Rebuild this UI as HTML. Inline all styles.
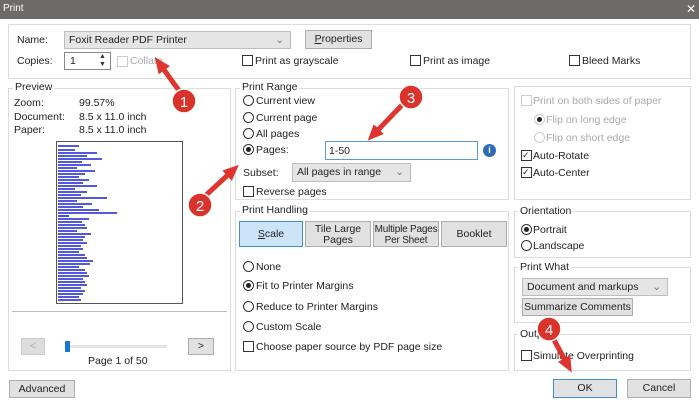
<!DOCTYPE html><html><head><style>
*{box-sizing:border-box;margin:0;padding:0}
body{width:699px;height:406px;background:#fff;font-family:"Liberation Sans",sans-serif;font-size:10.5px;color:#222;position:relative;overflow:hidden}
.a{position:absolute;white-space:nowrap}
.g{position:absolute;border:1px solid #dcdcdc}
.gl{position:absolute;background:#fff;padding:0 2px;font-size:10.5px}
.btn{position:absolute;background:#e1e1e1;border:1px solid #adadad;text-align:center;font-size:10.5px;white-space:nowrap}
.cb{position:absolute;width:11px;height:11px;border:1px solid #333;background:#fff}
.rb{position:absolute;width:11px;height:11px;border:1px solid #333;border-radius:50%;background:#fff}
.rb.on::after{content:"";position:absolute;left:2px;top:2px;width:5px;height:5px;border-radius:50%;background:#222}
.dis{color:#aaa}
.combo{position:absolute;background:#e5e5e5;border:1px solid #bdbdbd;padding-left:4px}
</style></head><body>
<div class="a" style="left:0;top:0;width:699px;height:19px;background:#6d6a69"></div>
<div class="a" style="left:3px;top:3px;color:#fff;font-size:10px">Print</div>
<div class="a" style="left:686px;top:2px;color:#fff;font-size:12px">✕</div>

<div class="g" style="left:8px;top:24px;width:683px;height:55px"></div>
<div class="a" style="left:17px;top:34px">Name:</div>
<div class="combo" style="left:64px;top:31px;width:227px;height:18px;line-height:16px">Foxit Reader PDF Printer<span style="position:absolute;right:6px;color:#777">⌄</span></div>
<div class="btn" style="left:305px;top:30px;width:67px;height:19px;line-height:17px"><u>P</u>roperties</div>
<div class="a" style="left:17px;top:55px">Copies:</div>
<div class="a" style="left:64px;top:52px;width:47px;height:18px;border:1px solid #888;background:#fff;padding:2px 5px">1</div>
<div class="a" style="left:99px;top:53px;font-size:7px;line-height:8px;color:#333">▲<br>▼</div>
<div class="cb" style="left:117px;top:56px;border-color:#ccc"></div>
<div class="a dis" style="left:130px;top:55px">Collate</div>
<div class="cb" style="left:242px;top:55px"></div><div class="a" style="left:255px;top:55px">Print as grayscale</div>
<div class="cb" style="left:410px;top:55px"></div><div class="a" style="left:423px;top:55px">Print as image</div>
<div class="cb" style="left:569px;top:55px"></div><div class="a" style="left:582px;top:55px">Bleed Marks</div>

<div class="g" style="left:8px;top:88px;width:223px;height:283px"></div><div class="gl" style="left:13px;top:81px">Preview</div>
<div class="a" style="left:14px;top:97px">Zoom:</div><div class="a" style="left:79px;top:97px">99.57%</div>
<div class="a" style="left:14px;top:111px">Document:</div><div class="a" style="left:79px;top:111px">8.5 x 11.0 inch</div>
<div class="a" style="left:14px;top:124px">Paper:</div><div class="a" style="left:79px;top:124px">8.5 x 11.0 inch</div>
<div class="a" style="left:56px;top:141px;width:127px;height:163px;border:1px solid #555;background:#fff"></div>
<svg class="a" style="left:57px;top:144px" width="60" height="158"><g stroke="#1a22d0" stroke-width="1.6">
<line x1="1" y1="2" x2="22" y2="2"/><line x1="1" y1="6" x2="18" y2="6"/><line x1="1" y1="9" x2="40" y2="9"/><line x1="1" y1="12" x2="30" y2="12"/><line x1="1" y1="15" x2="45" y2="15"/><line x1="1" y1="18" x2="25" y2="18"/><line x1="1" y1="21" x2="34" y2="21"/><line x1="1" y1="24" x2="20" y2="24"/><line x1="1" y1="27" x2="38" y2="27"/><line x1="1" y1="30" x2="28" y2="30"/><line x1="1" y1="33" x2="22" y2="33"/><line x1="1" y1="36" x2="32" y2="36"/><line x1="1" y1="39" x2="26" y2="39"/><line x1="1" y1="42" x2="40" y2="42"/><line x1="1" y1="45" x2="18" y2="45"/><line x1="1" y1="48" x2="30" y2="48"/><line x1="1" y1="51" x2="24" y2="51"/><line x1="1" y1="54" x2="50" y2="54"/><line x1="1" y1="57" x2="20" y2="57"/><line x1="1" y1="60" x2="35" y2="60"/><line x1="1" y1="63" x2="26" y2="63"/><line x1="1" y1="66" x2="42" y2="66"/><line x1="1" y1="69" x2="60" y2="69"/><line x1="1" y1="72" x2="12" y2="72"/><line x1="1" y1="75" x2="32" y2="75"/><line x1="1" y1="78" x2="25" y2="78"/><line x1="1" y1="81" x2="28" y2="81"/><line x1="1" y1="84" x2="30" y2="84"/><line x1="1" y1="87" x2="20" y2="87"/><line x1="1" y1="90" x2="34" y2="90"/><line x1="1" y1="93" x2="28" y2="93"/><line x1="1" y1="96" x2="26" y2="96"/><line x1="1" y1="99" x2="30" y2="99"/><line x1="1" y1="102" x2="24" y2="102"/><line x1="1" y1="105" x2="26" y2="105"/><line x1="1" y1="108" x2="22" y2="108"/><line x1="1" y1="111" x2="28" y2="111"/><line x1="1" y1="114" x2="30" y2="114"/><line x1="1" y1="117" x2="36" y2="117"/><line x1="1" y1="120" x2="33" y2="120"/><line x1="1" y1="123" x2="22" y2="123"/><line x1="1" y1="126" x2="28" y2="126"/><line x1="1" y1="129" x2="30" y2="129"/><line x1="1" y1="132" x2="32" y2="132"/><line x1="1" y1="135" x2="26" y2="135"/><line x1="1" y1="138" x2="28" y2="138"/><line x1="1" y1="141" x2="30" y2="141"/><line x1="1" y1="144" x2="24" y2="144"/><line x1="1" y1="147" x2="28" y2="147"/><line x1="1" y1="150" x2="26" y2="150"/><line x1="1" y1="153" x2="22" y2="153"/><line x1="1" y1="156" x2="24" y2="156"/></g></svg>
<div class="a" style="left:12px;top:311px;width:215px;height:1px;background:#bbb"></div>
<div class="btn" style="left:21px;top:338px;width:24px;height:17px;color:#aaa;line-height:15px;background:#ddd;border-color:#ccc">&lt;</div>
<div class="btn" style="left:188px;top:338px;width:26px;height:17px;line-height:15px">&gt;</div>
<div class="a" style="left:65px;top:345px;width:102px;height:3px;background:#e4e4e4"></div>
<div class="a" style="left:65px;top:341px;width:5px;height:11px;background:#1a74d0"></div>
<div class="a" style="left:88px;top:355px">Page 1 of 50</div>
<div class="btn" style="left:9px;top:380px;width:66px;height:18px;line-height:16px">Advanced</div>

<div class="g" style="left:235px;top:88px;width:274px;height:112px"></div><div class="gl" style="left:240px;top:81px">Print Range</div>
<div class="rb" style="left:243px;top:95px"></div><div class="a" style="left:256px;top:95px">Current view</div>
<div class="rb" style="left:243px;top:112px"></div><div class="a" style="left:256px;top:112px">Current page</div>
<div class="rb" style="left:243px;top:128px"></div><div class="a" style="left:256px;top:128px">All pages</div>
<div class="rb on" style="left:243px;top:144px"></div><div class="a" style="left:256px;top:144px">Pages:</div>
<div class="a" style="left:325px;top:141px;width:153px;height:19px;border:1px solid #5a9bd5;background:#fff;padding:3px 3px">1-50</div>
<div class="a" style="left:483px;top:144px;width:13px;height:13px;border-radius:50%;background:#2e6db4;color:#fff;font-size:9px;font-weight:bold;text-align:center;line-height:13px">i</div>
<div class="a" style="left:243px;top:167px">Subset:</div>
<div class="combo" style="left:292px;top:163px;width:119px;height:19px;line-height:17px">All pages in range<span style="position:absolute;right:6px;color:#777">⌄</span></div>
<div class="cb" style="left:243px;top:186px"></div><div class="a" style="left:256px;top:186px">Reverse pages</div>

<div class="g" style="left:235px;top:211px;width:274px;height:160px"></div><div class="gl" style="left:240px;top:204px">Print Handling</div>
<div class="btn" style="left:239px;top:221px;width:64px;height:26px;line-height:24px;background:#cce4f7;border-color:#3f8fd0"><u>S</u>cale</div>
<div class="btn" style="left:305px;top:221px;width:66px;height:26px;line-height:11px;padding-top:2px">Tile Large<br>Pages</div>
<div class="btn" style="left:373px;top:221px;width:66px;height:26px;line-height:11px;padding-top:2px;font-size:10px;letter-spacing:-0.2px">Multiple Pages<br>Per Sheet</div>
<div class="btn" style="left:441px;top:221px;width:66px;height:26px;line-height:24px">Booklet</div>
<div class="rb" style="left:243px;top:261px"></div><div class="a" style="left:256px;top:261px">None</div>
<div class="rb on" style="left:243px;top:280px"></div><div class="a" style="left:256px;top:280px">Fit to Printer Margins</div>
<div class="rb" style="left:243px;top:301px"></div><div class="a" style="left:256px;top:301px">Reduce to Printer Margins</div>
<div class="rb" style="left:243px;top:321px"></div><div class="a" style="left:256px;top:321px">Custom Scale</div>
<div class="cb" style="left:243px;top:341px"></div><div class="a" style="left:256px;top:341px">Choose paper source by PDF page size</div>

<div class="g" style="left:514px;top:86px;width:177px;height:114px"></div>
<div class="cb" style="left:521px;top:95px;border-color:#ccc"></div><div class="a dis" style="left:533px;top:95px">Print on both sides of paper</div>
<div class="rb on" style="left:534px;top:114px;border-color:#ccc"></div><div class="a dis" style="left:546px;top:114px">Flip on long edge</div>
<div class="rb" style="left:534px;top:132px;border-color:#ccc"></div><div class="a dis" style="left:546px;top:132px">Flip on short edge</div>
<div class="cb" style="left:521px;top:150px;font-size:9px;line-height:9px">✓</div><div class="a" style="left:533px;top:150px">Auto-Rotate</div>
<div class="cb" style="left:521px;top:167px;font-size:9px;line-height:9px">✓</div><div class="a" style="left:533px;top:167px">Auto-Center</div>

<div class="g" style="left:514px;top:211px;width:177px;height:47px"></div><div class="gl" style="left:518px;top:205px">Orientation</div>
<div class="rb on" style="left:521px;top:224px"></div><div class="a" style="left:533px;top:224px">Portrait</div>
<div class="rb" style="left:521px;top:240px"></div><div class="a" style="left:533px;top:240px">Landscape</div>

<div class="g" style="left:514px;top:267px;width:177px;height:56px"></div><div class="gl" style="left:518px;top:261px">Print What</div>
<div class="combo" style="left:522px;top:278px;width:146px;height:18px;line-height:16px">Document and markups<span style="position:absolute;right:6px;color:#777">⌄</span></div>
<div class="btn" style="left:522px;top:298px;width:111px;height:18px;line-height:16px">Summarize Comments</div>

<div class="g" style="left:514px;top:334px;width:177px;height:37px"></div><div class="gl" style="left:518px;top:328px">Output</div>
<div class="cb" style="left:521px;top:350px"></div><div class="a" style="left:533px;top:350px">Simulate Overprinting</div>

<div class="btn" style="left:553px;top:379px;width:64px;height:19px;line-height:17px;border:1px solid #3f8fd0">OK</div>
<div class="btn" style="left:627px;top:379px;width:64px;height:19px;line-height:17px">Cancel</div>

<svg class="a" style="left:0;top:0" width="699" height="406"><defs><marker id="m" markerWidth="16" markerHeight="14" refX="4" refY="7" orient="auto" markerUnits="userSpaceOnUse"><path d="M0,0 L16,7 L0,14 z" fill="#e0342e"/></marker></defs>
<g stroke="#e0342e" stroke-width="5" fill="none" stroke-linecap="round" marker-end="url(#m)">
<line x1="180" y1="92" x2="162" y2="67"/>
<line x1="205" y1="196" x2="230" y2="173"/>
<line x1="403" y1="104" x2="376" y2="132"/>
<line x1="553" y1="338" x2="566" y2="362"/>
</g>
<g fill="#d9332b" stroke="#fff" stroke-width="1.5"><circle cx="184" cy="101" r="12"/><circle cx="200" cy="205" r="12"/><circle cx="411" cy="97" r="12"/><circle cx="549" cy="329" r="12"/></g>
<g fill="#fff" font-family="Liberation Sans" font-size="15" text-anchor="middle"><text x="184" y="107">1</text><text x="200" y="211">2</text><text x="411" y="103">3</text><text x="549" y="335">4</text></g></svg>
</body></html>
